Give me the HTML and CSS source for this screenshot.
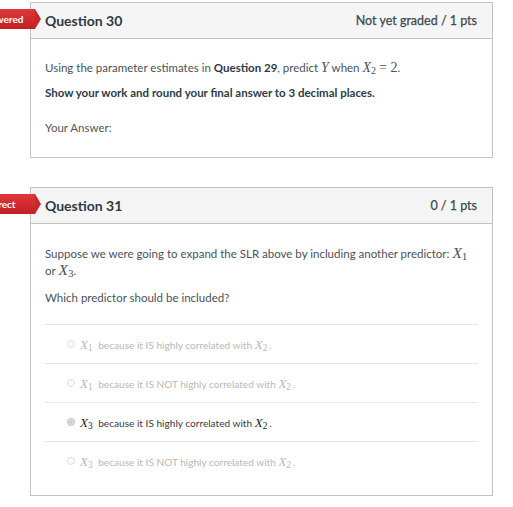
FILE: index.html
```html
<!DOCTYPE html>
<html>
<head>
<meta charset="utf-8">
<link rel="stylesheet" href="styles.css">
</head>
<body>
<div class="page">
  <div class="question">
    <div class="badge">Unanswered</div>
    <div class="q-header">
      <span class="q-title">Question 30</span>
      <span class="q-pts">Not yet graded / 1 pts</span>
    </div>
    <div class="q-body q30">
      <p class="p1">Using the parameter estimates in <b>Question 29</b>, predict <span class="m">Y</span> when <span class="m">X<sub>2</sub></span> <span class="mr">= 2</span>.</p>
      <p class="p2"><b>Show your work and round your final answer to 3 decimal places.</b></p>
      <p class="p3">Your Answer:</p>
    </div>
  </div>

  <div class="question">
    <div class="badge">Incorrect</div>
    <div class="q-header">
      <span class="q-title">Question 31</span>
      <span class="q-pts">0 / 1 pts</span>
    </div>
    <div class="q-body q31">
      <p class="p1">Suppose we were going to expand the SLR above by including another predictor: <span class="m big">X<sub>1</sub></span><br>or <span class="m big">X<sub>3</sub></span>.</p>
      <p class="p2">Which predictor should be included?</p>
      <div class="answers">
        <div class="answer"><span class="radio"></span><span class="a-text"><span class="m">X<sub>1</sub></span> because it IS highly correlated with <span class="m">X<sub>2</sub></span>.</span></div>
        <div class="answer"><span class="radio"></span><span class="a-text"><span class="m">X<sub>1</sub></span> because it IS NOT highly correlated with <span class="m">X<sub>2</sub></span>.</span></div>
        <div class="answer selected"><span class="radio on"></span><span class="a-text"><span class="m">X<sub>3</sub></span> because it IS highly correlated with <span class="m">X<sub>2</sub></span>.</span></div>
        <div class="answer"><span class="radio"></span><span class="a-text"><span class="m">X<sub>3</sub></span> because it IS NOT highly correlated with <span class="m">X<sub>2</sub></span>.</span></div>
      </div>
    </div>
  </div>
</div>
</body>
</html>
```

FILE: styles.css
```css
html, body {
  margin: 0;
  padding: 0;
  background: #fff;
}
body {
  font-family: Lato, "Open Sans", sans-serif;
  color: #2d3b45;
  overflow: hidden;
}
.page {
  display: flex;
  flex-direction: column;
  gap: 29px;
  padding: 2px 20px 0 30px;
}
.question {
  position: relative;
  border: 1px solid #c3c3c3;
  background: #fff;
}
.badge {
  position: absolute;
  top: 6px;
  right: calc(100% - 4px);
  width: 79px;
  height: 20px;
  line-height: 20px;
  text-align: center;
  font-size: 10px;
  font-weight: bold;
  color: #fff;
  background: linear-gradient(#e0383a, #c21f24);
  white-space: nowrap;
}
.badge::after {
  content: "";
  position: absolute;
  left: 100%;
  top: 0;
  border-top: 10px solid transparent;
  border-bottom: 10px solid transparent;
  border-left: 6px solid #c9272b;
}
.q-header {
  height: 35px;
  background: #f5f5f5;
  border-bottom: 1px solid #c3c3c3;
  display: flex;
  justify-content: space-between;
  align-items: center;
  padding: 0 15px 0 14px;
}
.q-title {
  font-size: 14px;
  font-weight: bold;
  color: #2d3b45;
}
.q-pts {
  font-size: 12.5px;
  font-weight: normal;
  color: #3d4a54;
  -webkit-text-stroke: 0.25px #3d4a54;
}
.q-body {
  padding: 0 14px;
  font-size: 11.5px;
  color: #4a5158;
}
.q-body p {
  margin: 0;
  line-height: 16px;
}
.q-body b {
  color: #2d3b45;
}
.q30 .p1 { padding-top: 21px; }
.q30 .p2 { padding-top: 9px; }
.q30 .p3 { padding-top: 19px; padding-bottom: 21px; color: #555; }
.q31 .p1 { padding-top: 21px; }
.q31 .p2 { padding-top: 11px; }
.m {
  font-family: "Liberation Serif", "DejaVu Serif", serif;
  font-style: italic;
  font-size: 14px;
  line-height: 1;
}
.m.big { font-size: 15.5px; }
.m sub {
  font-style: normal;
  font-size: 72%;
  vertical-align: -2px;
  line-height: 0;
}
.mr {
  font-family: "Liberation Serif", serif;
  font-size: 14px;
  line-height: 1;
}
.answers {
  margin-top: 18px;
  border-top: 1px solid #e6e6e6;
  padding-bottom: 15px;
}
.answer {
  height: 38px;
  display: flex;
  align-items: center;
  padding-left: 22px;
  border-bottom: 1px solid #e6e6e6;
}
.answer:last-child {
  border-bottom: none;
}
.a-text {
  font-size: 10.1px;
  color: #b8b8b8;
  white-space: nowrap;
}
.a-text .m {
  font-size: 13px;
  margin: 0 3px 0 0;
}
.a-text .m:last-child {
  margin: 0 2px 0 0;
}
.answer.selected .a-text {
  color: #3a3a3a;
}
.answer.selected .a-text .m {
  color: #222;
}
.radio {
  flex: none;
  width: 8px;
  height: 8px;
  border-radius: 50%;
  border: 1px solid #e0e0e0;
  background: #fafafa;
  margin-right: 5px;
  box-sizing: border-box;
}
.radio.on {
  background: #cccccc;
  border-color: #c4c4c4;
  box-shadow: inset 0 0 0 1px #e8e8e8;
}
```
